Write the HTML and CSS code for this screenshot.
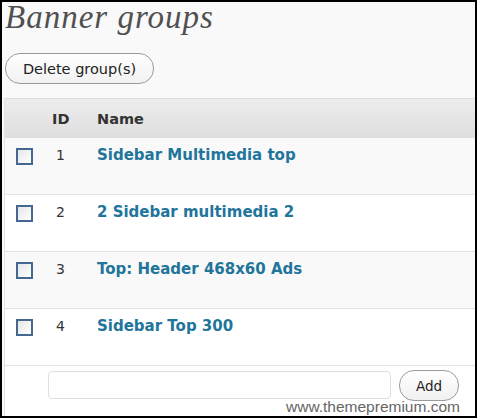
FILE: index.html
```html
<!DOCTYPE html>
<html>
<head>
<meta charset="utf-8">
<link rel="stylesheet" href="styles.css">
</head>
<body>
<div class="frame">
  <h2 class="title">Banner groups</h2>
  <div class="actions"><button class="btn btn-delete">Delete group(s)</button></div>
  <div class="table">
    <div class="row head">
      <div class="c-check"></div>
      <div class="c-id">ID</div>
      <div class="c-name">Name</div>
    </div>
    <div class="row alt">
      <div class="c-check"><span class="cb"></span></div>
      <div class="c-id num">1</div>
      <div class="c-name"><a href="#">Sidebar Multimedia top</a></div>
    </div>
    <div class="row">
      <div class="c-check"><span class="cb"></span></div>
      <div class="c-id num">2</div>
      <div class="c-name"><a href="#">2 Sidebar multimedia 2</a></div>
    </div>
    <div class="row alt">
      <div class="c-check"><span class="cb"></span></div>
      <div class="c-id num">3</div>
      <div class="c-name"><a href="#">Top: Header 468x60 Ads</a></div>
    </div>
    <div class="row">
      <div class="c-check"><span class="cb"></span></div>
      <div class="c-id num">4</div>
      <div class="c-name"><a href="#">Sidebar Top 300</a></div>
    </div>
    <div class="foot">
      <input class="field" type="text">
      <button class="btn btn-add">Add</button>
    </div>
  </div>
  <div class="watermark">www.themepremium.com</div>
</div>
</body>
</html>
```
FILE: styles.css
```css
html, body { margin: 0; padding: 0; }
body { background: #fff; }
.frame {
  position: relative;
  box-sizing: border-box;
  width: 477px;
  height: 418px;
  border: 2px solid #000;
  background: #f9f9f9;
  overflow: hidden;
  font-family: "DejaVu Sans", Verdana, sans-serif;
}
.title {
  margin: 0;
  padding: 0 0 0 3px;
  height: 50px;
  font-family: "Liberation Serif", Georgia, serif;
  font-style: italic;
  font-weight: normal;
  font-size: 33px;
  letter-spacing: 1px;
  line-height: 28px;
  padding-top: 1px;
  box-sizing: border-box;
  color: #505050;
}
.actions { padding: 0 0 0 3px; height: 46px; }
.btn {
  font-family: "DejaVu Sans", Verdana, sans-serif;
  color: #222;
  background: linear-gradient(#fff, #f1f1f1);
  border: 1px solid #9a9a9a;
  border-radius: 15px;
  padding: 0;
  cursor: pointer;
}
.btn-delete { width: 149px; height: 31px; margin-top: 1px; font-size: 14.5px; }
.table {
  margin-left: 2px;
  border-left: 1px solid #e3e3e3;
  border-top: 1px solid #dcdcdc;
  background: #fff;
}
.row {
  display: grid;
  grid-template-columns: 44px 48px 1fr;
  height: 56px;
  border-bottom: 1px solid #e2e2e2;
  font-size: 14px;
  color: #333;
}
.row.alt { background: #f9f9f9; }
.row.head {
  height: 39px;
  background: linear-gradient(#ededed, #dedede);
  border-bottom: none;
  font-weight: bold;
  font-size: 14.5px;
  color: #333;
  align-items: center;
}
.c-check { padding-left: 11px; padding-top: 10px; }
.head .c-check { padding: 0; }
.c-id { padding-left: 3px; }
.num { padding-left: 7px; padding-top: 9px; }
.head .c-id, .head .c-name { padding-top: 0; }
.c-name { padding-top: 8px; }
.c-name a {
  color: #21759b;
  font-weight: bold;
  font-size: 15px;
  text-decoration: none;
}
.cb {
  display: block;
  width: 13px;
  height: 13px;
  border: 2px solid #44688f;
  background: linear-gradient(135deg, #e6e6e6, #fff);
}
.foot {
  display: flex;
  align-items: flex-start;
  gap: 8px;
  height: 53px;
  padding-left: 43px;
  padding-top: 4px;
  box-sizing: border-box;
  background: #fff;
}
.field {
  box-sizing: border-box;
  width: 343px;
  height: 28px;
  margin-top: 1px;
  border: 1px solid #dfdfdf;
  border-radius: 4px;
  background: #fff;
}
.btn-add { width: 60px; height: 31px; font-size: 13.5px; }
.watermark {
  position: absolute;
  right: 15px;
  bottom: 1px;
  font-family: "Liberation Sans", Arial, sans-serif;
  font-size: 15.5px;
  color: #666;
  line-height: 16px;
}
```
